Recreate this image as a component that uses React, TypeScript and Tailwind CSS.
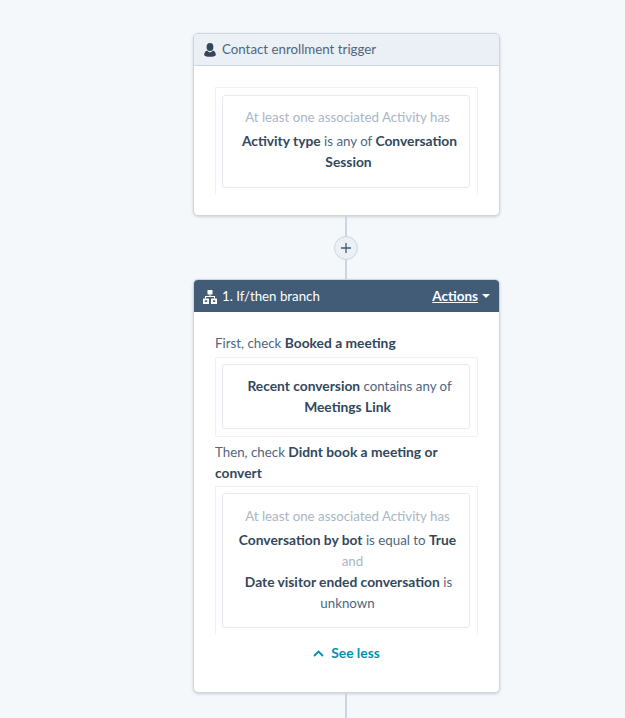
import React from 'react';

const Bold = ({ children }: { children: React.ReactNode }) => (
  <span className="text-[13.800px] font-bold leading-none text-[#33475b]">{children}</span>
);

const Line = ({ className = '', children }: { className?: string; children: React.ReactNode }) => (
  <div className={`whitespace-nowrap leading-[21px] ${className}`}>{children}</div>
);

const Connector = ({ className }: { className: string }) => (
  <div className={`mr-[1px] w-[2px] bg-[#cbd6e2] ${className}`} />
);

const PersonIcon = () => (
  <svg width="12" height="14" viewBox="0 0 12 14" fill="#33475b">
    <ellipse cx="6" cy="4" rx="3.400" ry="4" />
    <path d="M3.200 7.400C1.400 8 .3 9.300.3 11v1.200c0 .8 2.200 1.600 5.700 1.600s5.700-.8 5.700-1.600V11c0-1.700-1.100-3-2.900-3.600C8 8.600 7.100 9.200 6 9.200S4 8.600 3.200 7.400z" />
  </svg>
);

const BranchIcon = () => (
  <svg width="14" height="14" viewBox="0 0 14 14" fill="#ffffff">
    <rect x="4.500" y="0" width="5" height="4.500" rx="0.500" />
    <rect x="0" y="8.500" width="6" height="5.500" rx="0.500" />
    <rect x="8" y="8.500" width="6" height="5.500" rx="0.500" />
    <path d="M6.500 4.500h1v1.500H12v2.500h-1V7H3v1.500H2V6h4.500z" />
    <rect x="1.800" y="10.300" width="2.400" height="1.600" fill="#425b76" />
    <rect x="9.800" y="10.300" width="2.400" height="1.600" fill="#425b76" />
  </svg>
);

export default function App() {
  return (
    <div
      className="h-[718px] overflow-hidden bg-[#f5f8fa] pl-[193px] pt-[33px] text-[13.300px] text-[#4f6580]"
      style={{ fontFamily: 'Lato, "Noto Sans", sans-serif' }}
    >
      <div className="flex w-[307px] flex-col items-center">
        {/* trigger card */}
        <div className="h-[183px] w-full overflow-hidden rounded-[5px] border border-[#cbd6e2] bg-white shadow-[0_1px_3px_rgba(45,62,80,0.2)]">
          <div className="flex h-[32px] items-center gap-[6px] border-b border-[#cbd6e2] bg-[#eaf0f6] pl-[10px] pt-[1px]">
            <PersonIcon />
            <span>Contact enrollment trigger</span>
          </div>
          <div className="mx-[21px] mt-[21px] h-[108px] border border-b-0 border-[#eef2f6] pl-[6px] pr-[7px] pt-[7px]">
            <div className="h-[93px] rounded-[3px] border border-[#e5e9f0] pl-[11px] pr-[8px] pt-[11px] text-center">
              <Line className="text-[#a9b6c6]">At least one associated Activity has</Line>
              <Line className="mt-[3px] pl-[4px]"><Bold>Activity type</Bold> is any of <Bold>Conversation</Bold></Line>
              <Line className="pl-[2px]"><Bold>Session</Bold></Line>
            </div>
          </div>
        </div>

        <Connector className="h-[20px]" />
        <div className="mr-[1px] flex h-[24px] w-[24px] items-center justify-center rounded-full border border-[#cbd6e2] bg-[#eaf0f6]">
          <svg width="12" height="12" viewBox="0 0 12 12" stroke="#425b76" strokeWidth="1.300">
            <path d="M6 1v10M1 6h10" />
          </svg>
        </div>
        <Connector className="h-[19px]" />

        {/* branch card */}
        <div className="h-[414px] w-full overflow-hidden rounded-[5px] border border-[#cbd6e2] bg-white shadow-[0_1px_3px_rgba(45,62,80,0.2)]">
          <div className="flex h-[32px] items-center bg-[#425b76] px-[9px] pt-[1px] text-white">
            <BranchIcon />
            <span className="ml-[5px] flex-1">1. If/then branch</span>
            <span className="text-[13.500px] font-bold underline">Actions</span>
            <span className="ml-[4px] mt-[-2px] h-0 w-0 border-x-[4px] border-t-[4px] border-x-transparent border-t-white" />
          </div>
          <div className="px-[21px] pt-[21px]">
            <Line>First, check <Bold>Booked a meeting</Bold></Line>
            <div className="mt-[3px] h-[80px] rounded-[2px] border border-[#eef2f6] pl-[6px] pr-[7px] pt-[6px]">
              <div className="h-[65px] rounded-[3px] border border-[#e5e9f0] pl-[11px] pr-[8px] pt-[11px] text-center">
                <Line className="pl-[4px]"><Bold>Recent conversion</Bold> contains any of</Line>
                <Line><Bold>Meetings Link</Bold></Line>
              </div>
            </div>
            <Line className="mt-[5px]">Then, check <Bold>Didnt book a meeting or</Bold></Line>
            <Line><Bold>convert</Bold></Line>
            <div className="mt-[2px] h-[149px] border border-b-0 border-[#eef2f6] pl-[6px] pr-[7px] pt-[6px]">
              <div className="h-[135px] rounded-[3px] border border-[#e5e9f0] pl-[11px] pr-[8px] pt-[12px] text-center">
                <Line className="text-[#a9b6c6]">At least one associated Activity has</Line>
                <Line className="mt-[3px]"><Bold>Conversation by bot</Bold> is equal to <Bold>True</Bold></Line>
                <Line className="pl-[10px] text-[#a9b6c6]">and</Line>
                <Line className="pl-[2px]"><Bold>Date visitor ended conversation</Bold> is</Line>
                <Line>unknown</Line>
              </div>
            </div>
            <div className="mt-[8px] flex items-center justify-center gap-[7px] text-[13.800px] font-bold text-[#0091ae]">
              <svg width="11" height="7" viewBox="0 0 11 7" fill="none" stroke="#0091ae" strokeWidth="1.800">
                <path d="M1 6l4.500-4.500L10 6" />
              </svg>
              <span>See less</span>
            </div>
          </div>
        </div>

        <Connector className="h-[30px]" />
      </div>
    </div>
  );
}
